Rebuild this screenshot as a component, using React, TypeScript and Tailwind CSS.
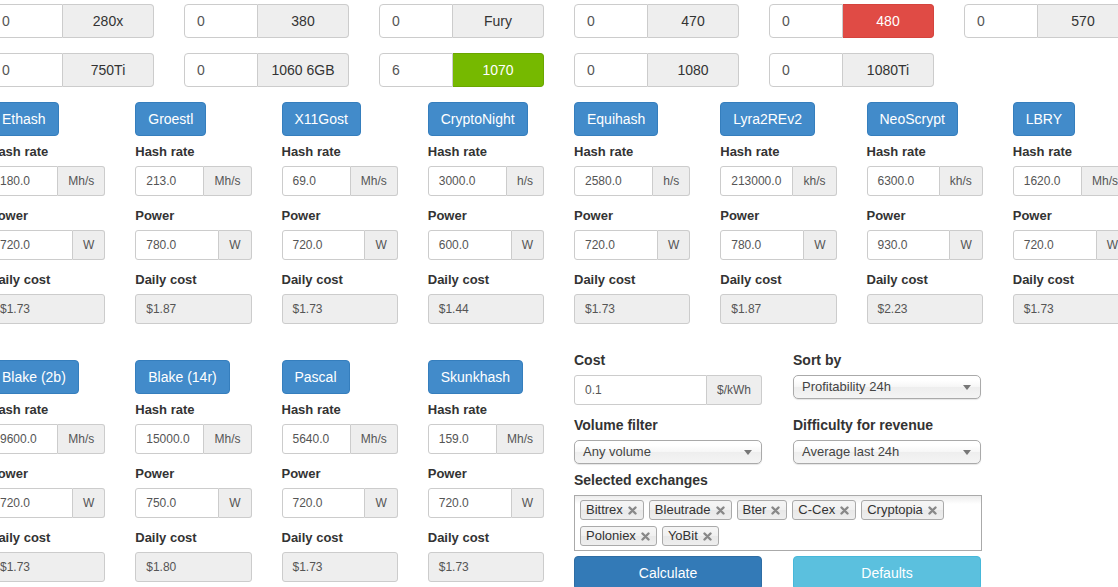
import React from 'react';

type Gpu = { count: string; name: string; tone?: 'green' | 'red' };

type Algo = {
  name: string;
  hashrate: string;
  unit: string;
  power: string;
  cost: string;
};

const gpus: Gpu[] = [
  { count: '0', name: '280x' },
  { count: '0', name: '380' },
  { count: '0', name: 'Fury' },
  { count: '0', name: '470' },
  { count: '0', name: '480', tone: 'red' },
  { count: '0', name: '570' },
  { count: '0', name: '750Ti' },
  { count: '0', name: '1060 6GB' },
  { count: '6', name: '1070', tone: 'green' },
  { count: '0', name: '1080' },
  { count: '0', name: '1080Ti' },
];

const algosTop: Algo[] = [
  { name: 'Ethash', hashrate: '180.0', unit: 'Mh/s', power: '720.0', cost: '$1.73' },
  { name: 'Groestl', hashrate: '213.0', unit: 'Mh/s', power: '780.0', cost: '$1.87' },
  { name: 'X11Gost', hashrate: '69.0', unit: 'Mh/s', power: '720.0', cost: '$1.73' },
  { name: 'CryptoNight', hashrate: '3000.0', unit: 'h/s', power: '600.0', cost: '$1.44' },
  { name: 'Equihash', hashrate: '2580.0', unit: 'h/s', power: '720.0', cost: '$1.73' },
  { name: 'Lyra2REv2', hashrate: '213000.0', unit: 'kh/s', power: '780.0', cost: '$1.87' },
  { name: 'NeoScrypt', hashrate: '6300.0', unit: 'kh/s', power: '930.0', cost: '$2.23' },
  { name: 'LBRY', hashrate: '1620.0', unit: 'Mh/s', power: '720.0', cost: '$1.73' },
];

const algosBottom: Algo[] = [
  { name: 'Blake (2b)', hashrate: '9600.0', unit: 'Mh/s', power: '720.0', cost: '$1.73' },
  { name: 'Blake (14r)', hashrate: '15000.0', unit: 'Mh/s', power: '750.0', cost: '$1.80' },
  { name: 'Pascal', hashrate: '5640.0', unit: 'Mh/s', power: '720.0', cost: '$1.73' },
  { name: 'Skunkhash', hashrate: '159.0', unit: 'Mh/s', power: '720.0', cost: '$1.73' },
];

const exchanges = ['Bittrex', 'Bleutrade', 'Bter', 'C-Cex', 'Cryptopia', 'Poloniex', 'YoBit'];

const GpuGroup: React.FC<{ gpu: Gpu }> = ({ gpu }) => {
  const addon =
    gpu.tone === 'green'
      ? 'bg-[#76b900] border-[#6aa600] text-white'
      : gpu.tone === 'red'
        ? 'bg-[#e04b45] border-[#d4433d] text-white'
        : 'bg-[#eeeeee] border-[#cccccc] text-[#333]';
  return (
    <div className="flex h-[34px] text-[14px]">
      <div className="w-[74px] rounded-l-[4px] border border-[#cccccc] bg-white pl-[12px] leading-[32px] text-[#555]">
        {gpu.count}
      </div>
      <div className={`flex flex-1 items-center justify-center rounded-r-[4px] border border-l-0 ${addon}`}>
        {gpu.name}
      </div>
    </div>
  );
};

const SmallGroup: React.FC<{ value: string; unit: string }> = ({ value, unit }) => (
  <div className="flex h-[30px] text-[12px] text-[#555]">
    <div className="min-w-0 flex-1 rounded-l-[3px] border border-[#cccccc] bg-white pl-[10px] leading-[28px]">
      {value}
    </div>
    <div className="flex items-center rounded-r-[3px] border border-l-0 border-[#cccccc] bg-[#eeeeee] px-[10px]">
      {unit}
    </div>
  </div>
);

const AlgoCard: React.FC<{ algo: Algo }> = ({ algo }) => (
  <div className="flex flex-col items-start">
    <div className="mb-[7px] flex h-[34px] items-center whitespace-nowrap rounded-[4px] border border-[#357ebd] bg-[#428bca] px-[12px] text-[14px] text-white">
      {algo.name}
    </div>
    <div className="w-full">
      <div className="mb-[5px] text-[13px] font-bold leading-[18px] text-[#333]">Hash rate</div>
      <SmallGroup value={algo.hashrate} unit={algo.unit} />
      <div className="mb-[5px] mt-[11px] text-[13px] font-bold leading-[18px] text-[#333]">Power</div>
      <SmallGroup value={algo.power} unit="W" />
      <div className="mb-[5px] mt-[11px] text-[13px] font-bold leading-[18px] text-[#333]">Daily cost</div>
      <div className="h-[30px] rounded-[3px] border border-[#cccccc] bg-[#eeeeee] pl-[10px] text-[12px] leading-[28px] text-[#555]">
        {algo.cost}
      </div>
    </div>
  </div>
);

const Arrow = () => (
  <svg width="8" height="5" viewBox="0 0 8 5" className="shrink-0">
    <polygon points="0,0 8,0 4,5" fill="#777" />
  </svg>
);

const ChosenSelect: React.FC<{ value: string }> = ({ value }) => (
  <div className="flex h-[24px] items-center justify-between rounded-[5px] border border-[#aaaaaa] bg-[linear-gradient(#ffffff_20%,#f6f6f6_50%,#eeeeee_52%,#f4f4f4_100%)] pl-[8px] pr-[9px] text-[13px] text-[#444] shadow-[0_1px_1px_rgba(0,0,0,0.1)]">
    <span>{value}</span>
    <Arrow />
  </div>
);

const Tag: React.FC<{ label: string }> = ({ label }) => (
  <div className="flex h-[20px] items-center gap-[5px] rounded-[3px] border border-[#aaaaaa] bg-[linear-gradient(#f4f4f4_20%,#f0f0f0_50%,#e8e8e8_52%,#eeeeee_100%)] pl-[5px] pr-[6px] text-[13px] text-[#333]">
    <span>{label}</span>
    <svg width="9" height="9" viewBox="0 0 9 9">
      <path d="M1.5 1.5L7.5 7.5M7.5 1.5L1.5 7.5" stroke="#888" strokeWidth="2.4" strokeLinecap="round" />
    </svg>
  </div>
);

const FormLabel: React.FC<{ children: React.ReactNode }> = ({ children }) => (
  <div className="mb-[5px] text-[14px] font-bold leading-[20px] text-[#333]">{children}</div>
);

export default function App() {
  return (
    <div className="h-[587px] w-[1118px] overflow-hidden bg-white font-['Liberation_Sans',Arial,sans-serif] text-[#333]">
      <div className="ml-[-11px] w-[1200px] pt-[4px]">
        {/* GPU counts */}
        <div className="grid grid-cols-[repeat(6,165px)] gap-x-[30px] gap-y-[15px]">
          {gpus.map((g) => (
            <GpuGroup key={g.name} gpu={g} />
          ))}
        </div>

        {/* Algorithms, first row */}
        <div className="mt-[15px] grid grid-cols-[repeat(8,116.25px)] gap-x-[30px]">
          {algosTop.map((a) => (
            <AlgoCard key={a.name} algo={a} />
          ))}
        </div>

        <div className="flex items-start gap-x-[30px]">
          {/* Algorithms, second row */}
          <div className="grid grid-cols-[repeat(4,116.25px)] gap-x-[30px] pt-[36px]">
            {algosBottom.map((a) => (
              <AlgoCard key={a.name} algo={a} />
            ))}
          </div>

          {/* Settings */}
          <div className="w-[408px] pt-[26px]">
            <div className="grid grid-cols-[188px_188px] gap-x-[31px]">
              <div>
                <FormLabel>Cost</FormLabel>
                <SmallGroup value="0.1" unit="$/kWh" />
              </div>
              <div>
                <FormLabel>Sort by</FormLabel>
                <ChosenSelect value="Profitability 24h" />
              </div>
              <div className="mt-[10px]">
                <FormLabel>Volume filter</FormLabel>
                <ChosenSelect value="Any volume" />
              </div>
              <div className="mt-[10px]">
                <FormLabel>Difficulty for revenue</FormLabel>
                <ChosenSelect value="Average last 24h" />
              </div>
            </div>

            <div className="mt-[6px]">
              <FormLabel>Selected exchanges</FormLabel>
              <div className="flex h-[56px] flex-wrap content-start gap-x-[5px] gap-y-[6px] border border-[#aaaaaa] bg-[linear-gradient(#eeeeee_1%,#ffffff_15%)] px-[5px] pt-[4px]">
                {exchanges.map((e) => (
                  <Tag key={e} label={e} />
                ))}
              </div>
            </div>

            <div className="mt-[5px] grid grid-cols-[188px_188px] gap-x-[31px]">
              <button className="h-[34px] rounded-[4px] border border-[#2e6da4] bg-[#337ab7] text-[14px] text-white">
                Calculate
              </button>
              <button className="h-[34px] rounded-[4px] border border-[#46b8da] bg-[#5bc0de] text-[14px] text-white">
                Defaults
              </button>
            </div>
          </div>
        </div>
      </div>
    </div>
  );
}
